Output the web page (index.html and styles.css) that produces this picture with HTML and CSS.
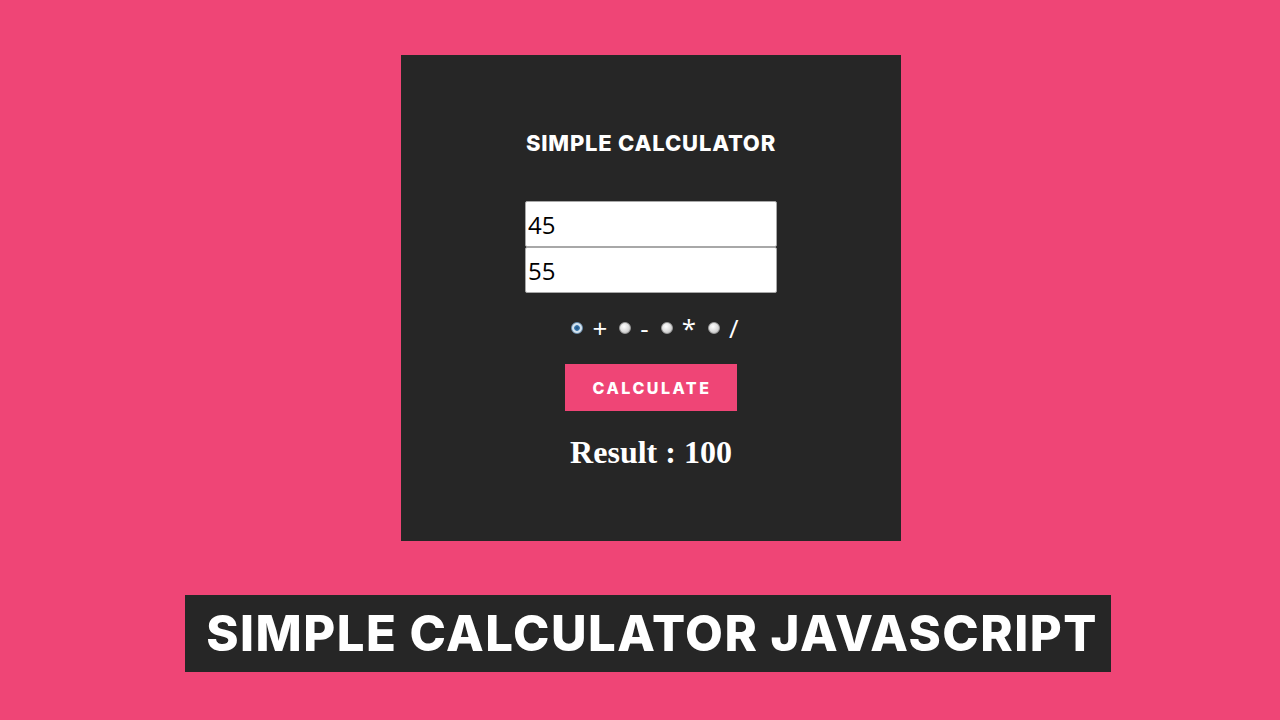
FILE: index.html
```html
<!DOCTYPE html>
<html lang="en">
<head>
<meta charset="utf-8">
<title>Simple Calculator</title>
<link rel="stylesheet" href="styles.css">
</head>
<body>
<main class="stage">
  <section class="calc">
    <h1 class="calc-title">SIMPLE CALCULATOR</h1>
    <div class="fields">
      <input class="num" type="text" value="45">
      <input class="num" type="text" value="55">
    </div>
    <div class="ops">
      <label class="op"><input type="radio" name="op" checked><span>+</span></label>
      <label class="op"><input type="radio" name="op"><span>-</span></label>
      <label class="op"><input type="radio" name="op"><span>*</span></label>
      <label class="op"><input type="radio" name="op"><span>/</span></label>
    </div>
    <button class="calc-btn" type="button">CALCULATE</button>
    <p class="result">Result : 100</p>
  </section>
  <div class="banner">SIMPLE CALCULATOR JAVASCRIPT</div>
</main>
</body>
</html>
```
FILE: styles.css
```css
html, body {
  margin: 0;
  height: 100%;
}
body {
  background: #ef4576;
  font-family: "Inter", "Noto Sans", sans-serif;
}
.stage {
  display: flex;
  flex-direction: column;
  align-items: center;
  padding-top: 55px;
  padding-left: 22px;
}
.calc {
  width: 500px;
  height: 486px;
  box-sizing: border-box;
  background: #262626;
  display: flex;
  flex-direction: column;
  align-items: center;
  padding-top: 73px;
}
.calc-title {
  margin: 0;
  color: #fff;
  font-family: "Inter", sans-serif;
  font-weight: 800;
  font-size: 22px;
  letter-spacing: 0.8px;
  line-height: 30px;
}
.fields {
  display: flex;
  flex-direction: column;
  margin-top: 43px;
}
.num {
  width: 252px;
  height: 46px;
  box-sizing: border-box;
  border: 1px solid #a8a8a8;
  border-radius: 2px;
  padding: 0 2px;
  font-family: "Open Sans", "Noto Sans", sans-serif;
  font-size: 24px;
  color: #000;
  background: #fff;
  margin: 0;
}
.ops {
  display: flex;
  align-items: center;
  margin-top: 21px;
  height: 28px;
  margin-left: 8px;
}
.op {
  display: flex;
  align-items: center;
  color: #fff;
  font-family: "Open Sans", "Noto Sans", sans-serif;
  font-size: 26px;
  line-height: 28px;
}
/* classic grey bead radios */
.op input {
  appearance: none;
  -webkit-appearance: none;
  width: 12px;
  height: 12px;
  margin: 0 9px 0 12px;
  border-radius: 50%;
  border: 1px solid #9a9a9a;
  box-sizing: border-box;
  background: radial-gradient(circle at 40% 35%, #ffffff 0%, #e2e2e2 45%, #b5b5b5 100%);
}
.op:first-child input {
  margin-left: 0;
}
.op input:checked {
  border-color: #6a8fb0;
  background: radial-gradient(circle, #1f4f7c 0%, #3a78ad 35%, #cfe0ee 45%, #e8eef3 100%);
}
.calc-btn {
  margin-top: 22px;
  width: 172px;
  height: 47px;
  border: none;
  background: #ef4576;
  color: #fff;
  font-family: "Inter", sans-serif;
  font-weight: 800;
  font-size: 16px;
  letter-spacing: 2.5px;
  padding: 0 0 0 2px;
  cursor: pointer;
}
.result {
  margin: 23px 0 0;
  color: #fff;
  font-family: "Liberation Serif", serif;
  font-weight: bold;
  font-size: 32px;
  line-height: 36px;
}
.banner {
  margin-top: 54px;
  margin-right: 6px;
  width: 926px;
  height: 77px;
  box-sizing: border-box;
  background: #262626;
  color: #fff;
  font-family: "Inter", sans-serif;
  font-weight: 800;
  font-size: 49px;
  letter-spacing: 1.5px;
  display: flex;
  align-items: center;
  justify-content: center;
  padding-left: 8px;
}
```
